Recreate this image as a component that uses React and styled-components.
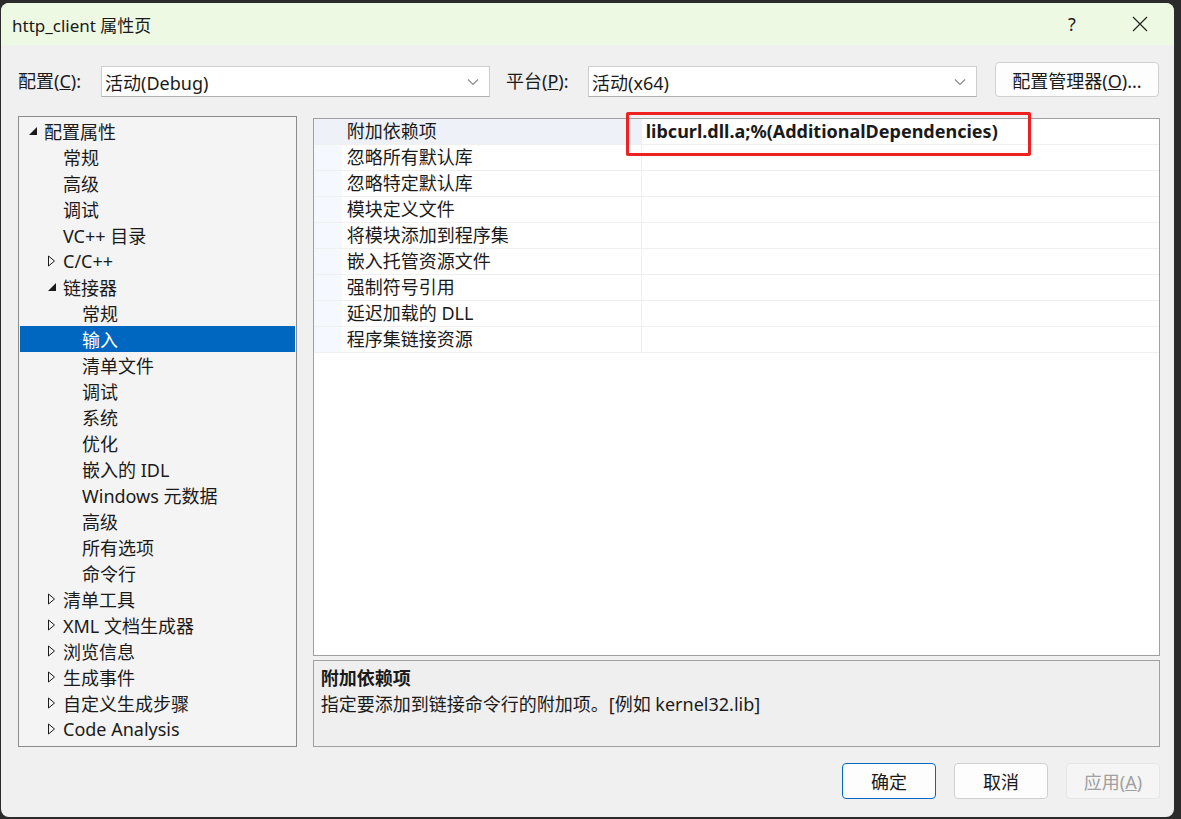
import React from "react";
import styled, { createGlobalStyle } from "styled-components";

const GlobalStyle = createGlobalStyle`
  html, body {
    margin: 0;
    background: #2b2b2b;
  }
  body {
    font-family: "Segoe UI", "Noto Sans", "Noto Sans CJK SC", sans-serif;
    color: #1a1a1a;
  }
`;

const Window = styled.div`
  position: relative;
  margin: 3px 0 0 1px;
  width: 1173px;
  height: 814px;
  background: #f0f0f0;
  border-radius: 8px;
  overflow: hidden;
  display: flex;
  flex-direction: column;
`;

const TitleBar = styled.div`
  height: 42px;
  flex-shrink: 0;
  background: #eef9e4;
  display: flex;
  align-items: center;
  padding-left: 11px;
  font-size: 17px;
`;

const Title = styled.div`
  flex: 1;
`;

const TitleButton = styled.div`
  width: 68px;
  height: 42px;
  display: flex;
  align-items: center;
  justify-content: center;
  font-size: 18px;
  color: #222;
`;

const Content = styled.div`
  flex: 1;
  display: flex;
  flex-direction: column;
  padding: 17px 14px 0 17px;
  font-size: 18px;
`;

const ConfigRow = styled.div`
  display: flex;
  align-items: flex-end;
  height: 35px;
`;

const Label = styled.div`
  width: ${(p) => p.width}px;
  height: 31px;
  line-height: 31px;
  font-size: 18px;
  white-space: nowrap;
`;

const Combo = styled.div`
  width: 389px;
  height: 31px;
  box-sizing: border-box;
  border: 1px solid #cdcdcd;
  border-bottom-color: #b0b0b0;
  background: #fff;
  display: flex;
  align-items: center;
  padding: 0 10px 0 3px;
  font-size: 18px;
  margin-right: ${(p) => p.gap}px;
`;

const ComboText = styled.div`
  flex: 1;
`;

const PushButton = styled.button`
  width: ${(p) => p.width || 94}px;
  height: ${(p) => p.height || 36}px;
  box-sizing: border-box;
  border-radius: 4px;
  border: 1px solid ${(p) => (p.primary ? "#0067c0" : p.disabled ? "#e6e6e6" : "#d0d0d0")};
  background: ${(p) => (p.disabled ? "#f5f5f5" : "#fdfdfd")};
  color: ${(p) => (p.disabled ? "#a0a0a0" : "#1a1a1a")};
  font-family: inherit;
  font-size: 18px;
  padding: 0;
`;

const Main = styled.div`
  display: flex;
  gap: 16px;
  margin-top: 19px;
  height: 631px;
`;

const Tree = styled.div`
  width: 279px;
  box-sizing: border-box;
  border: 1px solid #8c8c8c;
  background: #f4f4f4;
  padding: 1px 1px 0 1px;
`;

const TreeRow = styled.div`
  height: 26px;
  display: flex;
  align-items: center;
  padding-left: ${(p) => 8 + p.level * 19}px;
  background: ${(p) => (p.selected ? "#0067c0" : "transparent")};
  color: ${(p) => (p.selected ? "#fff" : "#1a1a1a")};
  font-size: 18px;
  white-space: nowrap;
`;

const Toggle = styled.span`
  width: 16px;
  flex-shrink: 0;
  display: flex;
  align-items: center;
`;

const RightCol = styled.div`
  width: 848px;
  display: flex;
  flex-direction: column;
  padding-top: 2px;
  gap: 4px;
`;

const Grid = styled.div`
  flex: 1;
  box-sizing: border-box;
  border: 1px solid #a0a0a0;
  background: #fff;
`;

const GridRow = styled.div`
  display: grid;
  grid-template-columns: 28px 300px 1fr;
  height: 26px;
  border-bottom: 1px solid #f0f0f0;
  box-sizing: border-box;
`;

const Gutter = styled.div`
  background: ${(p) => (p.selected ? "#eef1f7" : "#f5f8fc")};
`;

const NameCell = styled.div`
  background: ${(p) => (p.selected ? "#eef1f7" : "#fff")};
  border-right: 1px solid #f0f0f0;
  padding-left: 5px;
  line-height: 25px;
  font-size: 18px;
  white-space: nowrap;
`;

const ValueCell = styled.div`
  padding-left: 4px;
  line-height: 25px;
  font-size: 18px;
  font-weight: 700;
  white-space: nowrap;
`;

const Description = styled.div`
  height: 87px;
  box-sizing: border-box;
  border: 1px solid #a0a0a0;
  background: #efefef;
  padding: 4px 7px;
  font-size: 18px;
  line-height: 26px;
`;

const DescTitle = styled.div`
  font-weight: 700;
`;

const ButtonRow = styled.div`
  display: flex;
  justify-content: flex-end;
  gap: 18px;
  margin-top: 16px;
`;

const Callout = styled.div`
  position: absolute;
  left: 625px;
  top: 109px;
  width: 405px;
  height: 44px;
  box-sizing: border-box;
  border: 3px solid #ee2020;
  border-radius: 2px;
  pointer-events: none;
`;

const Key = styled.span`
  text-decoration: underline;
`;

const Chevron = () => (
  <svg width="12" height="8" viewBox="0 0 12 8">
    <polyline points="1,1.5 6,6.5 11,1.5" fill="none" stroke="#888" strokeWidth="1.1" />
  </svg>
);

const Expanded = () => (
  <svg width="10" height="10" viewBox="0 0 10 10">
    <polygon points="9,1 9,9 1,9" fill="#1a1a1a" />
  </svg>
);

const Collapsed = () => (
  <svg width="10" height="12" viewBox="0 0 10 12">
    <polygon points="1.5,1 7.5,6 1.5,11" fill="none" stroke="#1a1a1a" strokeWidth="1" />
  </svg>
);

const tree = [
  { label: "配置属性", level: 0, toggle: "open" },
  { label: "常规", level: 1 },
  { label: "高级", level: 1 },
  { label: "调试", level: 1 },
  { label: "VC++ 目录", level: 1 },
  { label: "C/C++", level: 1, toggle: "closed" },
  { label: "链接器", level: 1, toggle: "open" },
  { label: "常规", level: 2 },
  { label: "输入", level: 2, selected: true },
  { label: "清单文件", level: 2 },
  { label: "调试", level: 2 },
  { label: "系统", level: 2 },
  { label: "优化", level: 2 },
  { label: "嵌入的 IDL", level: 2 },
  { label: "Windows 元数据", level: 2 },
  { label: "高级", level: 2 },
  { label: "所有选项", level: 2 },
  { label: "命令行", level: 2 },
  { label: "清单工具", level: 1, toggle: "closed" },
  { label: "XML 文档生成器", level: 1, toggle: "closed" },
  { label: "浏览信息", level: 1, toggle: "closed" },
  { label: "生成事件", level: 1, toggle: "closed" },
  { label: "自定义生成步骤", level: 1, toggle: "closed" },
  { label: "Code Analysis", level: 1, toggle: "closed" },
];

const props = [
  { name: "附加依赖项", value: "libcurl.dll.a;%(AdditionalDependencies)" },
  { name: "忽略所有默认库" },
  { name: "忽略特定默认库" },
  { name: "模块定义文件" },
  { name: "将模块添加到程序集" },
  { name: "嵌入托管资源文件" },
  { name: "强制符号引用" },
  { name: "延迟加载的 DLL" },
  { name: "程序集链接资源" },
];

export default function App() {
  return (
    <>
      <GlobalStyle />
      <Window>
        <TitleBar>
          <Title>http_client 属性页</Title>
          <TitleButton>?</TitleButton>
          <TitleButton>
            <svg width="16" height="16" viewBox="0 0 16 16">
              <path d="M1 1 L15 15 M15 1 L1 15" stroke="#222" strokeWidth="1.2" />
            </svg>
          </TitleButton>
        </TitleBar>
        <Content>
          <ConfigRow>
            <Label width={83}>
              配置(<Key>C</Key>):
            </Label>
            <Combo gap={16}>
              <ComboText>活动(Debug)</ComboText>
              <Chevron />
            </Combo>
            <Label width={82}>
              平台(<Key>P</Key>):
            </Label>
            <Combo gap={18}>
              <ComboText>活动(x64)</ComboText>
              <Chevron />
            </Combo>
            <PushButton width={164} height={35}>
              配置管理器(<Key>O</Key>)...
            </PushButton>
          </ConfigRow>
          <Main>
            <Tree>
              {tree.map((t, i) => (
                <TreeRow key={i} level={t.level} selected={t.selected}>
                  <Toggle>
                    {t.toggle === "open" && <Expanded />}
                    {t.toggle === "closed" && <Collapsed />}
                  </Toggle>
                  {t.label}
                </TreeRow>
              ))}
            </Tree>
            <RightCol>
              <Grid>
                {props.map((p, i) => (
                  <GridRow key={i}>
                    <Gutter selected={i === 0} />
                    <NameCell selected={i === 0}>{p.name}</NameCell>
                    <ValueCell>{p.value}</ValueCell>
                  </GridRow>
                ))}
              </Grid>
              <Description>
                <DescTitle>附加依赖项</DescTitle>
                <div>指定要添加到链接命令行的附加项。[例如 kernel32.lib]</div>
              </Description>
            </RightCol>
          </Main>
          <ButtonRow>
            <PushButton primary>确定</PushButton>
            <PushButton>取消</PushButton>
            <PushButton disabled>
              应用(<Key>A</Key>)
            </PushButton>
          </ButtonRow>
        </Content>
        <Callout />
      </Window>
    </>
  );
}
